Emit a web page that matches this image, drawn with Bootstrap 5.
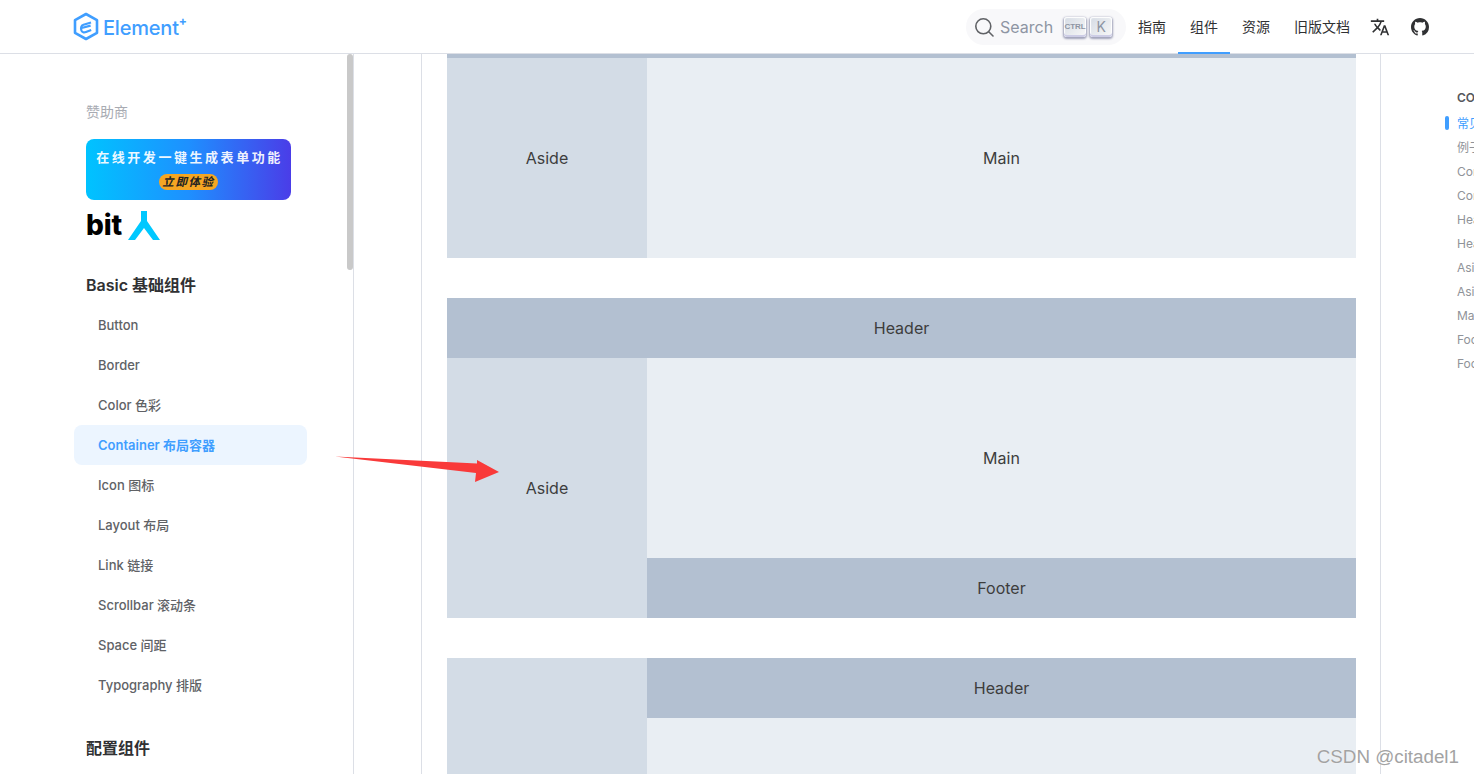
<!DOCTYPE html>
<html lang="zh-CN">
<head>
<meta charset="utf-8">
<title>Container 布局容器</title>
<link href="https://cdn.jsdelivr.net/npm/bootstrap@5.3.0/dist/css/bootstrap.min.css" rel="stylesheet">
<style>
html,body{height:774px;overflow:hidden;}
body{position:relative;background:#fff;color:#303133;font-family:Inter,"Noto Sans CJK SC",sans-serif;}
.topbar{height:54px;border-bottom:1px solid #dcdfe6;padding:0 45px 0 73px;}
.logo-mark{width:26px;height:29px;flex:none;}
.logo-word{font-family:Inter,sans-serif;font-size:20px;font-weight:500;color:#409eff;margin-left:4px;margin-top:2px;letter-spacing:-.2px;line-height:1;position:relative;}
.logo-plus{font-size:12px;font-weight:700;vertical-align:10px;line-height:0;margin-left:0;}
.search-pill{width:160px;height:36px;background:#f8f8fa;border-radius:18px;padding-left:8px;color:#8e95a3;font-size:16px;}
.search-pill svg{width:20px;height:20px;margin-right:6px;flex:none;}
.key-cap{width:22px;height:20px;border-radius:3px;background:linear-gradient(-225deg,#d5dbe4,#f8f8f8);box-shadow:inset 0 -2px 0 0 #cdcde6,inset 0 0 1px 1px #fff,0 1px 2px 1px rgba(30,35,90,.4);color:#8e95a3;display:flex;align-items:center;justify-content:center;line-height:1;}
.key-ctrl{font-size:8px;font-weight:600;margin-left:11px;margin-right:4px;font-family:"Liberation Sans",sans-serif;}
.key-k{font-size:14px;}
.top-link{height:53px;padding:0 12px;font-size:14px;color:#303133;text-decoration:none;display:flex;align-items:center;position:relative;}
.top-link.is-on::after{content:"";position:absolute;left:0;right:0;bottom:-1px;height:2px;background:#409eff;}
.top-icon{width:20px;height:20px;flex:none;fill:#303133;}
.top-icon-git{width:18px;height:18px;margin-left:21px;}
.shell{height:720px;overflow:hidden;}
.side-col{width:354px;flex:none;height:720px;border-right:1px solid #dcdfe6;padding:46px 46px 0 74px;overflow:hidden;position:relative;}
.side-thumb{position:absolute;right:0;top:0;width:6px;height:216px;background:#c9c9c9;border-radius:3px;}
.sponsor-head{margin-left:12px;font-size:14px;line-height:24px;color:#a8abb2;margin-bottom:15px;}
.sponsor-banner{margin-left:12px;width:205px;height:61px;border-radius:8px;background:linear-gradient(90deg,#00c3ff,#1e90ff 50%,#4a3de8);color:#fff;text-align:center;}
.sponsor-line{font-size:13px;font-weight:700;letter-spacing:2.55px;line-height:14px;padding-top:11px;margin-left:2px;opacity:.92;white-space:nowrap;}
.sponsor-pill{display:inline-block;width:59px;height:16px;margin-top:10px;background:#f5a623;border-radius:8px;color:#222;font-size:11.5px;font-weight:700;font-style:italic;line-height:16px;letter-spacing:1.6px;vertical-align:top;}
.bit-logo{margin-left:12px;margin-top:11px;height:29px;}
.bit-word{font-family:Inter,sans-serif;font-weight:800;font-size:28px;line-height:29px;color:#000;letter-spacing:-.2px;}
.bit-man{width:32px;height:29px;margin-left:6px;flex:none;}
.group-title{margin:33px 0 0 12px;height:24px;line-height:24px;font-size:16px;font-weight:600;color:#303133;}
.side-list{margin:8px 0 0;padding:0;list-style:none;}
.side-item{display:block;height:40px;line-height:40px;padding-left:24px;border-radius:8px;font-size:13px;font-weight:500;color:#606266;text-decoration:none;width:233px;}
.side-item.is-on{background:#ecf5ff;color:#409eff;font-weight:600;}
.side-list+.group-title{margin-top:31px;}
.docs-col{width:960px;flex:none;margin-left:67px;border-left:1px solid #dcdfe6;border-right:1px solid #dcdfe6;padding:0 24px 0 25px;height:720px;overflow:hidden;}
.demo-stack{margin-bottom:40px;color:#3d3d3d;font-size:16px;line-height:1.5;}
.zone{display:flex;align-items:center;justify-content:center;}
.zone-head{height:60px;background:#b3c0d1;}
.zone-strip{height:4px;background:#b3c0d1;}
.zone-side{width:200px;flex:none;background:#d3dce6;}
.zone-main{height:200px;background:#e9eef3;}
.toc-col{flex:none;width:93px;overflow:hidden;padding:35px 0 0 76px;position:relative;white-space:nowrap;}
.toc-head{font-size:12px;font-weight:600;line-height:18px;color:#55575c;margin-bottom:5px;}
.toc-list{margin:0;padding:0;list-style:none;}
.toc-list li{height:24px;line-height:24px;font-size:12px;color:#909399;}
.toc-list li.is-on{color:#409eff;}
.toc-mark{position:absolute;left:64px;top:62px;width:4px;height:14px;border-radius:2px;background:#409eff;}
.note-arrow{position:absolute;left:330px;top:450px;width:175px;height:40px;}
.watermark{position:absolute;right:15px;bottom:5px;font-family:"Liberation Sans",sans-serif;font-size:18.8px;line-height:24px;color:#a3a3a3;text-shadow:0 0 1px #fff;}
</style>
</head>
<body>
<nav class="topbar d-flex align-items-center justify-content-between">
  <a class="d-flex align-items-center text-decoration-none" href="#">
    <svg class="logo-mark" viewBox="0 0 26 29" fill="none" stroke="#409eff"><path d="M13 2 24 8.2V20.8L13 27 2 20.8V8.2Z" stroke-width="2.6" stroke-linejoin="round"/><path d="M18 10.5 10.5 12.8C8 13.6 7.6 16 8.4 18.5 9 20.4 11 20.8 13 20L18.2 18M8.6 16 17.6 13.6" stroke-width="2.2"/></svg>
    <span class="logo-word">Element<span class="logo-plus">+</span></span>
  </a>
  <div class="d-flex align-items-center">
    <div class="search-pill d-flex align-items-center">
      <svg viewBox="0 0 20 20" fill="none" stroke="#606266" stroke-width="1.6"><circle cx="9.3" cy="9.3" r="7.5"/><path d="m15 15 4 4" stroke-linecap="round"/></svg>
      <span>Search</span>
      <span class="key-cap key-ctrl">CTRL</span><span class="key-cap key-k">K</span>
    </div>
    <a class="top-link" href="#">指南</a>
    <a class="top-link is-on" href="#">组件</a>
    <a class="top-link" href="#">资源</a>
    <a class="top-link" href="#">旧版文档</a>
    <svg class="top-icon ms-2" viewBox="0 0 24 24"><path d="M12.87 15.07l-2.54-2.51.03-.03A17.52 17.52 0 0 0 14.07 6H17V4h-7V2H8v2H1v2h11.17C11.5 7.92 10.44 9.75 9 11.35 8.07 10.32 7.3 9.19 6.69 8h-2c.73 1.63 1.73 3.17 2.98 4.56l-5.09 5.02L4 19l5-5 3.11 3.11.76-2.04zM18.5 10h-2L12 22h2l1.12-3h4.75L21 22h2l-4.5-12zm-2.62 7l1.62-4.33L19.12 17h-3.24z"/></svg>
    <svg class="top-icon top-icon-git" viewBox="0 0 16 16"><path d="M8 0C3.58 0 0 3.58 0 8c0 3.54 2.29 6.53 5.47 7.59.4.07.55-.17.55-.38 0-.19-.01-.82-.01-1.49-2.01.37-2.53-.49-2.69-.94-.09-.23-.48-.94-.82-1.13-.28-.15-.68-.52-.01-.53.63-.01 1.08.58 1.23.82.72 1.21 1.87.87 2.33.66.07-.52.28-.87.51-1.07-1.78-.2-3.64-.89-3.64-3.95 0-.87.31-1.59.82-2.15-.08-.2-.36-1.02.08-2.12 0 0 .67-.21 2.2.82.64-.18 1.32-.27 2-.27.68 0 1.36.09 2 .27 1.53-1.04 2.2-.82 2.2-.82.44 1.1.16 1.92.08 2.12.51.56.82 1.27.82 2.15 0 3.07-1.87 3.75-3.65 3.95.29.25.54.73.54 1.48 0 1.07-.01 1.93-.01 2.2 0 .21.15.46.55.38A8.013 8.013 0 0 0 16 8c0-4.42-3.58-8-8-8z"/></svg>
  </div>
</nav>
<div class="shell d-flex">
  <aside class="side-col">
    <div class="side-thumb"></div>
    <div class="sponsor-head">赞助商</div>
    <div class="sponsor-banner">
      <div class="sponsor-line">在线开发一键生成表单功能</div>
      <span class="sponsor-pill">立即体验</span>
    </div>
    <div class="bit-logo d-flex align-items-center">
      <span class="bit-word">bit</span>
      <svg class="bit-man" viewBox="0 0 32 29" fill="#00c8ff"><path d="M13 0H19V10L32 29H25L16 17 7 29H0L13 10Z"/></svg>
    </div>
    <div class="group-title">Basic 基础组件</div>
    <ul class="side-list">
      <li><a class="side-item" href="#">Button</a></li>
      <li><a class="side-item" href="#">Border</a></li>
      <li><a class="side-item" href="#">Color 色彩</a></li>
      <li><a class="side-item is-on" href="#">Container 布局容器</a></li>
      <li><a class="side-item" href="#">Icon 图标</a></li>
      <li><a class="side-item" href="#">Layout 布局</a></li>
      <li><a class="side-item" href="#">Link 链接</a></li>
      <li><a class="side-item" href="#">Scrollbar 滚动条</a></li>
      <li><a class="side-item" href="#">Space 间距</a></li>
      <li><a class="side-item" href="#">Typography 排版</a></li>
    </ul>
    <div class="group-title">配置组件</div>
  </aside>
  <main class="docs-col">
    <div class="demo-stack">
      <div class="zone-strip"></div>
      <div class="d-flex">
        <div class="zone zone-side">Aside</div>
        <div class="zone zone-main flex-grow-1">Main</div>
      </div>
    </div>
    <div class="demo-stack">
      <div class="zone zone-head">Header</div>
      <div class="d-flex">
        <div class="zone zone-side">Aside</div>
        <div class="flex-grow-1">
          <div class="zone zone-main">Main</div>
          <div class="zone zone-head">Footer</div>
        </div>
      </div>
    </div>
    <div class="demo-stack">
      <div class="d-flex">
        <div class="zone zone-side">Aside</div>
        <div class="flex-grow-1">
          <div class="zone zone-head">Header</div>
          <div class="zone zone-main">Main</div>
        </div>
      </div>
    </div>
  </main>
  <div class="toc-col">
    <span class="toc-mark"></span>
    <div class="toc-head">CONTENTS</div>
    <ul class="toc-list">
      <li class="is-on">常见页面布局</li>
      <li>例子</li>
      <li>Container Attributes</li>
      <li>Container Slots</li>
      <li>Header Attributes</li>
      <li>Header Slots</li>
      <li>Aside Attributes</li>
      <li>Aside Slots</li>
      <li>Main Slots</li>
      <li>Footer Attributes</li>
      <li>Footer Slots</li>
    </ul>
  </div>
</div>
<svg class="note-arrow" viewBox="0 0 175 40" fill="#f93a3a"><path d="M5 6.5 147 13.5 147 10 169 22 145 32 146 23Z"/></svg>
<div class="watermark">CSDN @citadel1</div>
<script src="https://cdn.jsdelivr.net/npm/bootstrap@5.3.0/dist/js/bootstrap.bundle.min.js"></script>
</body>
</html>
